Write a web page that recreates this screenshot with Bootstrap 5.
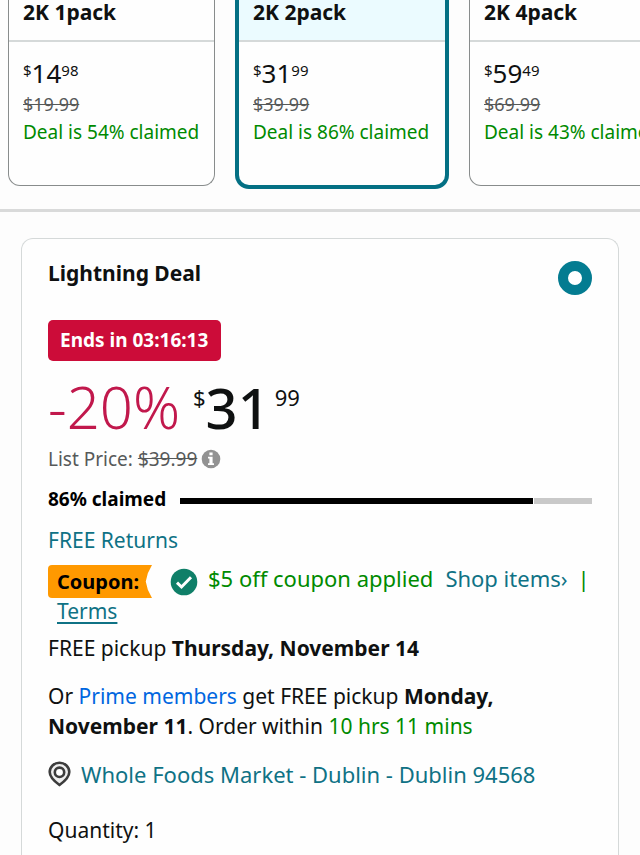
<!DOCTYPE html>
<html lang="en">
<head>
<meta charset="utf-8">
<meta name="viewport" content="width=device-width, initial-scale=1">
<title>Lightning Deal</title>
<link href="https://cdn.jsdelivr.net/npm/bootstrap@5.3.0/dist/css/bootstrap.min.css" rel="stylesheet">
<style>
  body { font-family: "Noto Sans", "Open Sans", sans-serif; font-size: 21px; line-height: 30px; color: #0f1111; background: #fdfdfd; }
  a { color: #0f7285; text-decoration: none; }
  .pack-strip { gap: 20px; padding: 0 8px 20px; border-bottom: 3px solid #d9dada; }
  .pack { flex: 0 0 207px; height: 186px; padding: 0; border: 1px solid #888c8c; border-top: 0; border-radius: 0 0 12px 12px; background: #fefefe; color: inherit; }
  .pack.chosen { flex-basis: 214px; height: 189px; border: 4px solid #047084; border-top: 0; border-radius: 0 0 14px 14px; }
  .pack-name { height: 42px; padding: 0 14px; line-height: 24px; border-bottom: 2px solid #d5d9d9; }
  .chosen .pack-name { background: #ebfbff; }
  .chosen .pack-name, .chosen .pack-info { padding-left: 14px; padding-right: 0; }
  .pack-info { padding: 16px 14px 0; font-size: 18px; line-height: 28px; }
  .pack-info .green { font-size: 19px; }
  .pack-price { margin-bottom: 2px; font-size: 26px; line-height: 30px; }
  .pack-price small { font-size: 15px; line-height: 24px; }
  .muted { color: #565959; }
  .green { color: #008a00; }
  .offer { margin: 26px 21px 0; padding: 22px 26px 0; border: 1px solid #d5d9d9; border-bottom: 0; border-radius: 12px 12px 0 0; background: #fefefe; }
  .offer label { line-height: 24px; }
  .offer .form-check-input { width: 34px; height: 34px; margin: 0; background: #fff; border: 10px solid #047c91; }
  .timer { padding: 5px 13px 6px 12px; border-radius: 5px; background: #cc0c39; color: #fff; font-size: 19px; margin-top: 25px; }
  .price-row { gap: 13px; margin-top: 16px; line-height: 60px; }
  .cut { font-size: 58px; font-weight: 300; color: #c1184c; }
  .now { font-size: 56px; font-weight: 500; }
  .now small { font-size: 22px; line-height: 40px; font-weight: 400; }
  .now small:last-child { margin-left: 5px; }
  .list-line { font-size: 19px; margin-top: 7px; }
  .claimed { font-size: 19px; gap: 14px; margin-top: 10px; color: #000; }
  .progress { height: 6px; margin-top: 4px; border-radius: 0; background: #c9c9c9; }
  .progress-bar { background: #000; border-right: 1px solid #fff; }
  .returns { margin-top: 11px; }
  .coupon-line { margin-top: 10px; font-size: 22px; line-height: 26px; }
  .coupon { flex: 0 0 104px; padding-left: 9px; border-radius: 4px 0 0 4px; background: #ff9900; color: #000; font-size: 20px; line-height: 33px; clip-path: polygon(0 0, 100% 0, 96% 25%, 94% 50%, 96% 75%, 100% 100%, 0 100%); }
  .tick { flex: none; margin: 0 10px 0 18px; }
  .shop { margin: 0 10px 0 12px; }
  .terms { margin-left: 9px; line-height: 26px; text-decoration: underline; text-underline-offset: 3px; }
  .delivery { gap: 18px; margin-top: 9px; }
  .place { gap: 10px; font-size: 22px; }
  .quantity { margin-top: 26px; }
  .prime { color: #0066e0; }
</style>
</head>
<body class="d-flex flex-column min-vh-100">
<div class="pack-strip d-flex align-items-start overflow-hidden">
  <button type="button" class="pack text-start d-flex flex-column align-items-stretch">
    <span class="pack-name fw-bold">2K 1pack</span>
    <span class="pack-info text-nowrap">
      <span class="pack-price d-flex"><small>$</small><span>14</span><small>98</small></span>
      <s class="muted d-block">$19.99</s><span class="green d-block">Deal is 54% claimed</span>
    </span>
  </button>
  <button type="button" class="pack chosen text-start d-flex flex-column align-items-stretch" aria-pressed="true">
    <span class="pack-name fw-bold">2K 2pack</span>
    <span class="pack-info text-nowrap">
      <span class="pack-price d-flex"><small>$</small><span>31</span><small>99</small></span>
      <s class="muted d-block">$39.99</s><span class="green d-block">Deal is 86% claimed</span>
    </span>
  </button>
  <button type="button" class="pack text-start d-flex flex-column align-items-stretch">
    <span class="pack-name fw-bold">2K 4pack</span>
    <span class="pack-info text-nowrap">
      <span class="pack-price d-flex"><small>$</small><span>59</span><small>49</small></span>
      <s class="muted d-block">$69.99</s><span class="green d-block">Deal is 43% claimed</span>
    </span>
  </button>
</div>

<main class="offer flex-grow-1">
  <div class="d-flex justify-content-between align-items-start">
    <label for="deal" class="fw-bold">Lightning Deal</label>
    <input class="form-check-input" type="radio" name="offer" id="deal" checked>
  </div>
  <div class="timer d-inline-block fw-bold">Ends in 03:16:13</div>
  <div class="price-row d-flex">
    <span class="cut">-20%</span>
    <span class="now d-flex"><small>$</small><span>31</span><small>99</small></span>
  </div>
  <div class="list-line muted d-flex align-items-center">
    <span>List Price: <s>$39.99</s></span>
    <svg class="ms-1" width="20" height="20" viewBox="0 0 20 20" aria-hidden="true"><circle cx="10" cy="10" r="9.3" fill="#929292"/><path d="M8.4 3.6h3.2v2.7H8.4zM7 7.800h4.600v6.400H13V16H7v-1.800h1.400V9.600H7z" fill="#fff"/></svg>
  </div>
  <div class="claimed d-flex align-items-center">
    <span class="fw-bold">86% claimed</span>
    <div class="progress flex-grow-1" role="progressbar" aria-label="Claimed" aria-valuenow="86" aria-valuemin="0" aria-valuemax="100"><div class="progress-bar" style="width:86%"></div></div>
  </div>
  <div class="returns"><a href="#">FREE Returns</a></div>
  <div class="coupon-line d-flex align-items-start text-nowrap">
    <span class="coupon fw-bold">Coupon:</span>
    <svg class="tick align-self-center" width="28" height="28" viewBox="0 0 28 28" aria-hidden="true"><circle cx="14" cy="14" r="13.3" fill="#0f7f68"/><path d="M7 14.7l4.5 4.3L21 9.3" fill="none" stroke="#fff" stroke-width="3"/></svg>
    <span class="green">$5 off coupon applied</span>
    <a href="#" class="shop">Shop items›</a>
    <span class="green">|</span>
  </div>
  <div class="d-flex"><a href="#" class="terms">Terms</a></div>
  <div class="delivery d-flex flex-column">
    <p class="mb-0">FREE pickup <b>Thursday, November 14</b></p>
    <p class="mb-0">Or <a href="#" class="prime">Prime members</a> get FREE pickup <b>Monday, November 11</b>. Order within <span class="green">10 hrs 11 mins</span></p>
    <div class="place d-flex align-items-center">
      <svg width="23" height="26" viewBox="0 0 23 26" aria-hidden="true"><path d="M11.5 1.7C6 1.7 1.7 5.9 1.7 11c0 5.500 4.800 9.400 9.800 13 5-3.600 9.800-7.500 9.800-13 0-5.100-4.300-9.300-9.800-9.300z" fill="#eee" stroke="#3c3c3c" stroke-width="2.600"/><circle cx="11.500" cy="11.300" r="4.700" fill="#fff" stroke="#3c3c3c" stroke-width="2.600"/></svg>
      <a href="#">Whole Foods Market - Dublin - Dublin 94568</a>
    </div>
  </div>
  <div class="quantity">Quantity: 1</div>
</main>
<script src="https://cdn.jsdelivr.net/npm/bootstrap@5.3.0/dist/js/bootstrap.bundle.min.js"></script>
</body>
</html>
